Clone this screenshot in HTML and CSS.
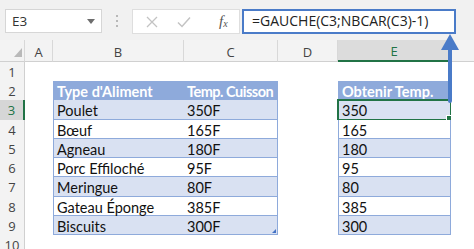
FILE: index.html
```html
<!DOCTYPE html>
<html>
<head>
<meta charset="utf-8">
<link rel="stylesheet" href="styles.css">
</head>
<body>
<div class="app">
  <div class="toolbar">
    <div class="namebox"><span>E3</span><svg class="caret" width="8" height="5" viewBox="0 0 8 5"><path d="M0 0H8L4 5Z" fill="#6d6d6d"/></svg></div>
    <div class="dots"><i></i><i></i><i></i></div>
    <div class="fxbtns">
      <svg width="12" height="12" viewBox="0 0 12 12"><path d="M1 1L11 11M11 1L1 11" stroke="#c3c3c3" stroke-width="1.3"/></svg>
      <svg width="14" height="12" viewBox="0 0 14 12"><path d="M1 6.5L5 10.5L13 1.5" stroke="#c3c3c3" stroke-width="1.5" fill="none"/></svg>
      <span class="fx">f<sub>x</sub></span>
    </div>
    <div class="formula">=GAUCHE(C3;NBCAR(C3)-1)</div>
  </div>
  <div class="sheet">
    <div class="corner"><span class="tri"></span></div>
    <div class="ch">A</div><div class="ch">B</div><div class="ch">C</div><div class="ch">D</div><div class="ch sel">E</div><div class="ch last"></div>

    <div class="rh">1</div><div class="c"></div><div class="c"></div><div class="c"></div><div class="c"></div><div class="c"></div><div class="c"></div>

    <div class="rh">2</div><div class="c"></div><div class="c t th tl">Type d'Aliment</div><div class="c t th tr tight">Temp. Cuisson</div><div class="c"></div><div class="c t th tl tr">Obtenir Temp.</div><div class="c"></div>

    <div class="rh sel">3</div><div class="c"></div><div class="c t band tl">Poulet</div><div class="c t band tr">350F</div><div class="c"></div><div class="c t band tl tr active">350<span class="handle"></span></div><div class="c"></div>

    <div class="rh">4</div><div class="c"></div><div class="c t tl">Bœuf</div><div class="c t tr">165F</div><div class="c"></div><div class="c t tl tr">165</div><div class="c"></div>

    <div class="rh">5</div><div class="c"></div><div class="c t band tl">Agneau</div><div class="c t band tr">180F</div><div class="c"></div><div class="c t band tl tr">180</div><div class="c"></div>

    <div class="rh">6</div><div class="c"></div><div class="c t tl">Porc Effiloché</div><div class="c t tr">95F</div><div class="c"></div><div class="c t tl tr">95</div><div class="c"></div>

    <div class="rh">7</div><div class="c"></div><div class="c t band tl">Meringue</div><div class="c t band tr">80F</div><div class="c"></div><div class="c t band tl tr">80</div><div class="c"></div>

    <div class="rh">8</div><div class="c"></div><div class="c t tl">Gateau Éponge</div><div class="c t tr">385F</div><div class="c"></div><div class="c t tl tr">385</div><div class="c"></div>

    <div class="rh">9</div><div class="c"></div><div class="c t band tl">Biscuits</div><div class="c t band tr corner-mark">300F</div><div class="c"></div><div class="c t band tl tr">300</div><div class="c"></div>

    <div class="rh">10</div><div class="c"></div><div class="c"></div><div class="c"></div><div class="c"></div><div class="c"></div><div class="c"></div>
  </div>
  <svg class="arrow" width="22" height="72" viewBox="0 0 22 72"><path d="M11 0L20 16H2Z" fill="#4a7bc8"/><rect x="9" y="12" width="4" height="57" rx="2" fill="#4a7bc8"/></svg>
</div>
</body>
</html>
```
FILE: styles.css
```css
* { box-sizing: border-box; }
html, body { margin: 0; padding: 0; background: #fff; }
.app { position: relative; width: 474px; height: 249px; overflow: hidden; font-family: "Open Sans", sans-serif; }
.toolbar { height: 40px; background: #f1f1f1; display: flex; align-items: flex-start; padding: 9px 0 0 5px; }
.namebox { width: 97px; height: 24px; background: #fff; border: 1px solid #d6d6d6; display: flex; align-items: center; justify-content: space-between; padding: 0 6px 0 6px; font-size: 13.5px; color: #333; }
.dots { width: 30px; height: 24px; display: flex; flex-direction: column; align-items: center; justify-content: center; gap: 3px; }
.dots i { width: 2px; height: 2px; background: #b8b8b8; display: block; }
.fxbtns { width: 108px; height: 25px; background: #fff; border: 1px solid #dedede; display: flex; align-items: center; padding-left: 13px; }
.fxbtns svg:first-child { margin-right: 19px; }
.fxbtns svg:nth-child(2) { margin-right: 28px; }
.fx { font-family: "Liberation Serif", serif; font-style: italic; font-size: 15px; color: #555; }
.fx sub { font-size: 10px; vertical-align: -1px; }
.formula { margin-left: 2px; width: 214px; height: 25px; background: #fff; border: 2px solid #4a7bc8; font-family: "Open Sans", sans-serif; font-size: 14px; color: #222; padding: 0 0 0 8px; line-height: 20px; }

.sheet { display: grid; grid-template-columns: 25px 28px 131px 94px 60px 113px 1fr; grid-template-rows: 22px 19px repeat(8, 19.25px) 19px; }
.corner { background: #f3f3f3; border-right: 1px solid #d8d8d8; border-bottom: 1px solid #d0d0d0; position: relative; }
.tri { position: absolute; left: 14px; top: 8px; width: 0; height: 0; border-left: 8px solid transparent; border-bottom: 9px solid #b9b9b9; }
.ch { background: #f3f3f3; border-right: 1px solid #d8d8d8; border-bottom: 1px solid #d0d0d0; display: flex; align-items: center; justify-content: center; font-size: 13px; color: #444; padding-top: 2px; }
.ch.last { border-right: none; }
.ch.sel { background: #dcdcdc; color: #217346; border-bottom: 2px solid #217346; }
.rh { background: #f3f3f3; border-right: 1px solid #d0d0d0; display: flex; align-items: center; justify-content: center; font-size: 13px; color: #444; padding-top: 1px; }
.rh.sel { background: #d6d6d6; color: #217346; border-right: 2px solid #217346; }
.c { background: #fff; font-family: "Lato", sans-serif; font-size: 14.5px; color: #111; padding: 2px 0 0 3px; line-height: 17px; white-space: nowrap; position: relative; }
.t { border-bottom: 1px solid #8eaadb; }
.th { background: #8eaadb; color: #fff; font-weight: bold; }
.tight { letter-spacing: -0.5px; }
.band { background: #d9e1f2; }
.tl { border-left: 1px solid #8eaadb; }
.tr { border-right: 1px solid #8eaadb; }
.active { outline: 2px solid #217346; outline-offset: -1px; }
.handle { position: absolute; right: -3px; bottom: -3px; width: 5px; height: 5px; background: #217346; border: 1px solid #fff; box-sizing: content-box; }
.corner-mark::after { content: ""; position: absolute; right: 1px; bottom: 1px; border-left: 4px solid transparent; border-bottom: 4px solid #4472c4; }
.arrow { position: absolute; left: 439px; top: 34px; }
```
